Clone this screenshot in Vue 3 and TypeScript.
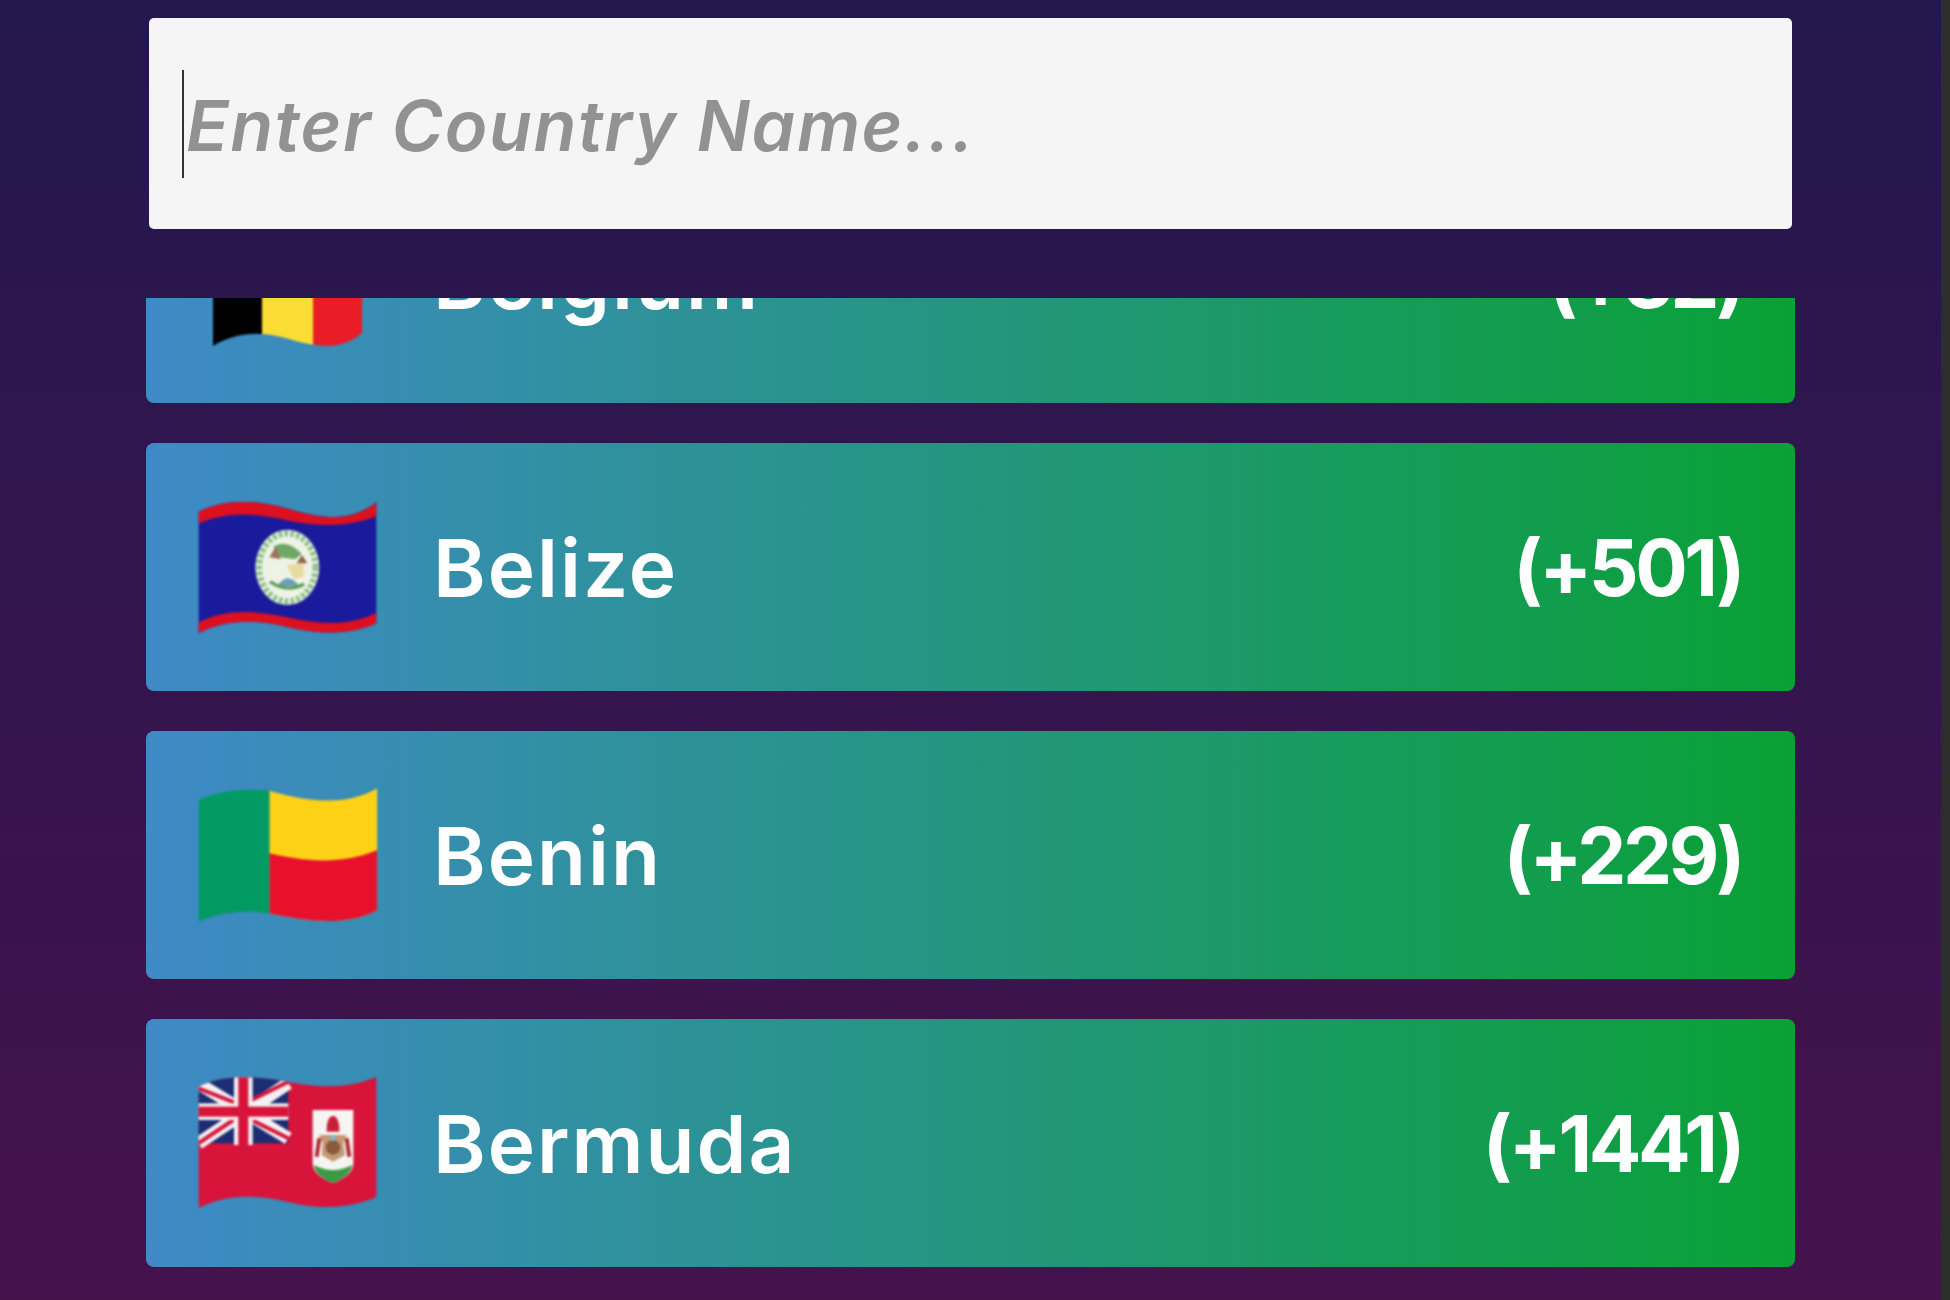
<script setup lang="ts">
interface Country {
  name: string
  code: string
  flag: 'belgium' | 'belize' | 'benin' | 'bermuda'
}

const countries: Country[] = [
  { name: 'Belgium', code: '(+32)', flag: 'belgium' },
  { name: 'Belize', code: '(+501)', flag: 'belize' },
  { name: 'Benin', code: '(+229)', flag: 'benin' },
  { name: 'Bermuda', code: '(+1441)', flag: 'bermuda' },
]
</script>

<template>
  <div class="page">
    <div class="content">
      <div class="search">
        <input class="search__input" type="text" placeholder="Enter Country Name..." />
        <span class="search__caret" />
      </div>

      <div class="list">
        <div v-for="c in countries" :key="c.name" class="row">
          <svg class="flag" viewBox="0 0 720 510">
            <g v-if="c.flag === 'belgium'" transform="translate(0 -3)">
              <clipPath id="clip-belgium">
                <path d="M129 110 C220 60 300 70 380 90 C460 110 520 115 576 80 L576 420 C520 468 460 465 380 445 C300 420 220 405 129 459 Z" />
              </clipPath>
              <g clip-path="url(#clip-belgium)">
                <rect x="129" y="0" width="147" height="510" fill="#000" />
                <rect x="276" y="0" width="153" height="510" fill="#fbdc35" />
                <rect x="429" y="0" width="147" height="510" fill="#ea1c26" />
              </g>
            </g>

            <g v-else-if="c.flag === 'belize'" transform="translate(0 -6)">
              <clipPath id="clip-belize">
                <path d="M85 95 C170 55 260 60 350 85 C450 115 540 130 620 65 L620 430 C540 465 450 465 350 440 C260 420 170 415 85 460 Z" />
              </clipPath>
              <g clip-path="url(#clip-belize)">
                <rect x="85" y="40" width="535" height="430" fill="#1a1a9c" />
                <path d="M85 95 C170 55 260 60 350 85 C450 115 540 130 620 65 L620 108 C540 140 450 142 350 121 C260 100 170 92 85 132 Z" fill="#dd1020" />
                <path d="M85 428 C170 385 260 392 350 412 C450 435 540 438 620 398 L620 470 L85 470 Z" fill="#dd1020" />
              </g>
              <ellipse cx="352" cy="262" rx="96" ry="113" fill="#eef3e6" />
              <ellipse cx="352" cy="262" rx="85" ry="102" fill="none" stroke="#8fc08c" stroke-width="19" stroke-dasharray="11 7" />
              <path d="M310 200 Q352 175 395 222 L375 238 L330 232 Z" fill="#6fa765" />
              <path d="M298 232 L318 198 L332 238 Z" fill="#a0735a" />
              <path d="M380 250 L396 225 L412 250 Z" fill="#8a6252" />
              <path d="M350 255 L402 250 L400 290 L372 298 Z" fill="#e6dba0" />
              <path d="M322 318 Q352 272 388 318 Z" fill="#6a9fba" />
              <path d="M300 305 Q352 340 402 312" fill="none" stroke="#5c9e58" stroke-width="10" />
            </g>

            <g v-else-if="c.flag === 'benin'">
              <clipPath id="clip-benin">
                <path d="M85 90 C150 60 230 55 298 62 C400 90 520 115 622 55 L622 420 C540 465 430 460 298 430 C230 420 150 425 85 455 Z" />
              </clipPath>
              <g clip-path="url(#clip-benin)">
                <rect x="298" y="40" width="330" height="430" fill="#fdd116" />
                <path d="M298 250 C400 275 520 285 622 240 L622 470 L298 470 Z" fill="#e8112d" />
                <rect x="85" y="40" width="213" height="430" fill="#029a63" />
              </g>
            </g>

            <g v-else transform="translate(0 6)">
              <clipPath id="clip-bermuda">
                <path d="M85 80 C170 40 260 50 355 65 C450 85 540 85 620 50 L620 410 C540 445 450 450 350 425 C260 405 170 400 85 445 Z" />
              </clipPath>
              <g clip-path="url(#clip-bermuda)">
                <rect x="85" y="40" width="535" height="420" fill="#d8143a" />
                <rect x="85" y="40" width="270" height="210" fill="#1d2d73" />
                <path d="M85 70 L355 235 M355 70 L85 250" stroke="#f4f0f2" stroke-width="38" />
                <path d="M85 85 L200 130 M355 65 L235 125 M85 250 L190 180 M355 235 L235 175" stroke="#d8143a" stroke-width="12" />
                <rect x="192" y="40" width="56" height="215" fill="#f4f0f2" />
                <rect x="85" y="130" width="270" height="50" fill="#f4f0f2" />
                <rect x="205" y="40" width="30" height="215" fill="#d8143a" />
                <rect x="85" y="140" width="270" height="30" fill="#d8143a" />
              </g>
              <path d="M428 150 H550 V310 Q550 345 489 370 Q428 345 428 310 Z" fill="#f6f4f2" />
              <path d="M432 315 Q489 345 546 315 Q545 345 489 370 Q433 345 432 315 Z" fill="#3c9a45" />
              <path d="M470 215 Q470 168 489 168 Q508 168 508 215 Z" fill="#c8203a" />
              <path d="M447 225 H530 L520 250 L525 285 L489 305 L455 285 L458 250 Z" fill="#c39a74" />
              <circle cx="489" cy="262" r="22" fill="#8b5a3c" />
              <path d="M448 235 L440 290 M530 235 L538 290" stroke="#b32833" stroke-width="12" />
              <circle cx="489" cy="235" r="8" fill="#7fb7d6" />
            </g>
          </svg>
          <span class="row__name">{{ c.name }}</span>
          <span class="row__code">{{ c.code }}</span>
        </div>
      </div>
    </div>
    <div class="scrollbar" />
  </div>
</template>

<style>
html, body { margin: 0; background: #2b1549; }
</style>

<style scoped>
.page {
  display: flex;
  width: 1950px;
  height: 1300px;
  overflow: hidden;
  font-family: "Inter", "Liberation Sans", sans-serif;
}

.content {
  flex: 1;
  min-width: 0;
  box-sizing: border-box;
  padding-top: 18px;
  background: linear-gradient(to bottom, #23174e, #45124c);
}

.scrollbar {
  flex: none;
  width: 9px;
  background: #2d2d2d;
}

.search {
  position: relative;
  width: 1643px;
  height: 211px;
  margin-left: 149px;
}
.search__input {
  display: block;
  width: 100%;
  height: 100%;
  box-sizing: border-box;
  border: 0;
  border-radius: 5px;
  padding: 3px 0 0 37px;
  background: #f5f5f5;
  font: italic 600 70px "Inter", "Liberation Sans", sans-serif;
  letter-spacing: 1.6px;
}
.search__input::placeholder { color: #929292; opacity: 1; }
.search__caret {
  position: absolute;
  left: 33px;
  top: 52px;
  width: 2px;
  height: 108px;
  background: #333;
}

.list {
  height: 1002px;
  margin-top: 69px;
  overflow: hidden;
}

.row {
  display: flex;
  align-items: center;
  width: 1649px;
  height: 248px;
  margin: 0 0 40px 146px;
  box-sizing: border-box;
  padding: 0 53px 0 24px;
  border-radius: 8px;
  background: linear-gradient(to right, #3f8ac7, #09a136);
  color: #fff;
  font-size: 80px;
  font-weight: 600;
}
.row:first-child { margin-top: -143px; }

.flag {
  width: 240px;
  height: 170px;
  flex: none;
  filter: blur(1px);
}
.row__name {
  margin-left: 23px;
  letter-spacing: 2px;
  filter: blur(0.5px);
}
.row__code {
  margin-left: auto;
  font-size: 78px;
  letter-spacing: -3.4px;
  font-weight: 700;
  filter: blur(0.5px);
}
</style>
